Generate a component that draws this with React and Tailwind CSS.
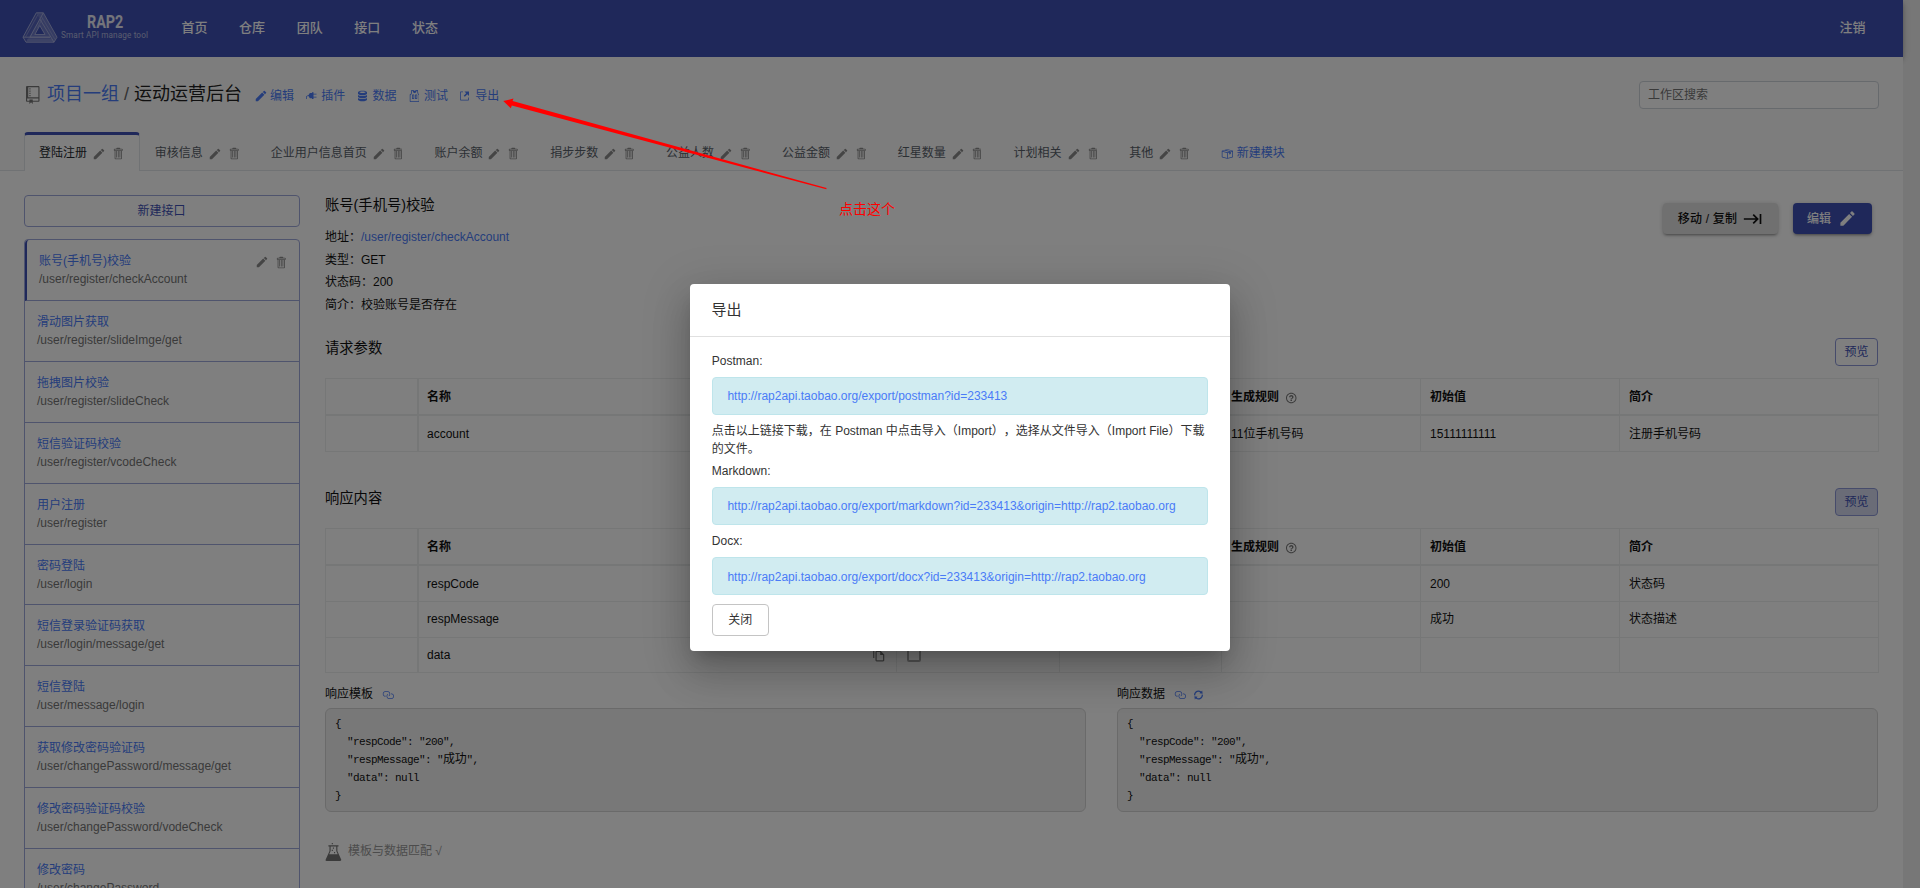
import { MdEdit, MdKeyboardTab, MdOutlineFileCopy } from 'react-icons/md';

const OCTICONS = {
  repo: [12, 'M4 9H3V8h1v1zm0-3H3v1h1V6zm0-2H3v1h1V4zm0-2H3v1h1V2zm8-1v12c0 .55-.45 1-1 1H6v2l-1.5-1.5L3 16v-2H1c-.55 0-1-.45-1-1V1c0-.55.45-1 1-1h10c.55 0 1 .45 1 1zm-1 10H1v2h2v-1h3v1h5v-2zm0-10H2v9h9V1z'],
  trash: [12, 'M11 2H9c0-.55-.45-1-1-1H5c-.55 0-1 .45-1 1H2c-.55 0-1 .45-1 1v1c0 .55.45 1 1 1v9c0 .55.45 1 1 1h7c.55 0 1-.45 1-1V5c.55 0 1-.45 1-1V3c0-.55-.45-1-1-1zm-1 12H3V5h1v8h1V5h1v8h1V5h1v8h1V5h1v9zm1-10H2V3h9v1z'],
  plug: [14, 'M14 6V5h-4V3H8v1H6c-1.03 0-1.77.81-2 2L3 7c-1.66 0-3 1.34-3 3v2h1v-2c0-1.11.89-2 2-2l1 1c.25 1.16.98 2 2 2h2v1h2v-2h4V9h-4V6h4z'],
  database: [12, 'M6 15c-3.31 0-6-.9-6-2v-2c0-.17.09-.34.21-.5.67.86 3 1.5 5.79 1.5s5.12-.64 5.79-1.5c.13.16.21.33.21.5v2c0 1.1-2.69 2-6 2zm0-4c-3.31 0-6-.9-6-2V7c0-.11.04-.21.09-.31.03-.06.07-.13.12-.19C.88 7.36 3.21 8 6 8s5.12-.64 5.79-1.5c.05.06.09.13.12.19.05.1.09.21.09.31v2c0 1.1-2.69 2-6 2zm0-4c-3.31 0-6-.9-6-2V3c0-1.1 2.69-2 6-2s6 .9 6 2v2c0 1.1-2.69 2-6 2zm0-5c-2.21 0-4 .45-4 1s1.79 1 4 1 4-.45 4-1-1.79-1-4-1z'],
  jersey: [14, 'M4.5 6l-.5.5v5l.5.5h2l.5-.5v-5L6.5 6h-2zM6 11H5V7h1v4zm6.27-7.25C12.05 2.37 11.96 1.12 12 0H9.02c0 .27-.13.48-.39.69-.25.2-.63.3-1.13.3-.5 0-.88-.09-1.13-.3-.23-.2-.36-.42-.36-.69H3c.05 1.13-.03 2.38-.25 3.75C2.55 5.13 1.95 5.88 1 6v9c.02.27.11.48.31.69.2.21.42.3.69.31h11c.27-.02.48-.11.69-.31.21-.2.3-.42.31-.69V6c-.95-.13-1.53-.88-1.75-2.25h.02zM13 15H2V7c.89-.5 1.48-1.25 1.72-2.25S4.03 2.5 4 1h1c-.02.78.16 1.47.52 2.06.36.58 1.02.89 2 .94.98-.02 1.64-.33 2-.94.36-.59.5-1.28.48-2.06h1c.02 1.42.13 2.55.33 3.38.2.81.69 2 1.67 2.63v8zM8.5 6l-.5.5v5l.5.5h2l.5-.5v-5l-.5-.5h-2zm1.5 5H9V7h1v4z'],
  external: [12, 'M11 10h1v3c0 .55-.45 1-1 1H1c-.55 0-1-.45-1-1V3c0-.55.45-1 1-1h3v1H1v10h10v-3zM6 2l2.25 2.25L5 7.5 6.5 9l3.25-3.25L12 8V2H6z'],
  box: [16, 'M1 4.27v7.47c0 .45.3.84.75.97l6.5 1.73c.16.05.34.05.5 0l6.5-1.73c.45-.13.75-.52.75-.97V4.27c0-.45-.3-.84-.75-.97l-6.5-1.74a1.4 1.4 0 0 0-.5 0L1.75 3.3c-.45.13-.75.52-.75.97zm7 9.09l-6-1.59V5l6 1.61v6.75zM2 4l2.5-.67L11 5.06l-2.5.67L2 4zm13 7.77l-6 1.59V6.61l2-.55V8.5l2-.53V5.53L15 5v6.77zm-2-7.24L6.5 2.8l2-.53L15 4l-2 .53z'],
  question: [14, 'M6 10h2v2H6v-2zm4-3.5C10 8.64 8 9 8 9H6c0-.55.45-1 1-1h.5c.28 0 .5-.22.5-.5v-1c0-.28-.22-.5-.5-.5h-1c-.28 0-.5.22-.5.5V7H4c0-1.5 1.5-3 3-3s3 1 3 2.5zM7 2.3c3.14 0 5.7 2.56 5.7 5.7s-2.56 5.7-5.7 5.7A5.71 5.71 0 0 1 1.3 8c0-3.14 2.56-5.7 5.7-5.7zM7 1C3.14 1 0 4.14 0 8s3.14 7 7 7 7-3.14 7-7-3.14-7-7-7z'],
  link: [16, 'M4 9h1v1H4c-1.5 0-3-1.69-3-3.5S2.55 3 4 3h4c1.45 0 3 1.69 3 3.5 0 1.41-.91 2.72-2 3.25V8.59c.58-.45 1-1.27 1-2.09C10 5.22 8.98 4 8 4H4c-.98 0-2 1.22-2 2.5S3 9 4 9zm9-3h-1v1h1c1 0 2 1.22 2 2.5S13.98 12 13 12H9c-.98 0-2-1.22-2-2.5 0-.83.42-1.64 1-2.09V6.25c-1.09.53-2 1.84-2 3.25C6 11.31 7.55 13 9 13h4c1.45 0 3-1.69 3-3.5S14.5 6 13 6z'],
  sync: [12, 'M10.24 7.4a4.15 4.15 0 0 1-1.2 3.6 4.346 4.346 0 0 1-5.41.54L4.8 10.4.5 9.8l.6 4.2 1.31-1.26c2.36 1.74 5.7 1.57 7.84-.54a5.876 5.876 0 0 0 1.74-4.46l-1.75-.34zM2.96 5a4.346 4.346 0 0 1 5.41-.54L7.2 5.6l4.3.6-.6-4.2-1.31 1.26c-2.36-1.74-5.7-1.57-7.85.54C.5 5.03-.06 6.65.01 8.26l1.75.35A4.17 4.17 0 0 1 2.96 5z'],
  beaker: [16, 'M14.38 14.59L11 7V3h1V2H3v1h1v4L.63 14.59A1 1 0 0 0 1.54 16h11.94c.72 0 1.2-.75.91-1.41h-.01zM3.75 10L5 7V3h5v4l1.25 3h-7.5zM8 8h1v1H8V8zM7 7H6V6h1v1zm0-3h1v1H7V4zm0-3H6V0h1v1z'],
};

function Octicon({ name, size = 12, className = '' }) {
  if (name === 'pencil') return <MdEdit className={`size-[14px] shrink-0 ${className}`} />;
  const [w, d] = OCTICONS[name];
  return (
    <svg viewBox={`0 0 ${w} 16`} width={(size * w) / 16} height={size} fill="currentColor" className={`shrink-0 ${className}`}>
      <path fillRule="evenodd" d={d} />
    </svg>
  );
}

function Logo() {
  return (
    <svg viewBox="0 0 36 31" className="-mt-px h-[31px] w-9 shrink-0" fill="none" strokeLinejoin="round">
      <path fill="#6c79c6" d="M14.300 .8h7L35 25.200l-3 5H4l-3-5z" />
      <path fill="#5563bc" d="M14.300 .8L1 25.200l3 5L17.800 7z" />
      <path stroke="#a9b1df" strokeWidth="0.900" d="M14.300 .8h7L35 25.200l-3 5H4l-3-5zM21.300 .8L8 25.200h20M17.800 7L32 30.200M28 25.200H1" />
      <path stroke="#a9b1df" strokeWidth="0.500" d="M16 2.500L3.500 25M19.500 4.500L33 27.500M5 28h26M15.500 15.500l5-9" />
      <path fill="#3f51b5" stroke="#a9b1df" strokeWidth="0.900" d="M17.800 13.500l5.200 9H12.800z" />
    </svg>
  );
}

const NAV = ['首页', '仓库', '团队', '接口', '状态'];

function Header() {
  return (
    <header className="flex h-[57px] w-[1903px] shrink-0 items-center bg-[#3f51b5] pb-[2px] pl-[21.500px] pr-[37.500px] text-white shadow-[0_2px_4px_-1px_rgba(0,0,0,0.2),0_4px_5px_0_rgba(0,0,0,0.14),0_1px_10px_0_rgba(0,0,0,0.12)]">
      <Logo />
      <div className="ml-1 flex w-[87px] flex-col items-center pb-[1px] whitespace-nowrap font-['Roboto',sans-serif] text-[#e8eaf6]">
        <span className="scale-x-[0.82] text-[17.500px] leading-[15px] font-bold">RAP2</span>
        <span className="scale-x-[0.86] text-[9.500px] leading-[9px] tracking-[0.150px] text-[#b4bbdf]">Smart API manage tool</span>
      </div>
      <nav className="ml-[33px] flex gap-[31.600px] text-[13px] font-medium">
        {NAV.map((n) => (
          <span key={n} className="w-[26px] whitespace-nowrap">{n}</span>
        ))}
      </nav>
      <span className="ml-auto text-[13px] font-medium">注销</span>
    </header>
  );
}

const ACTIONS = [
  ['pencil', '编辑'],
  ['plug', '插件'],
  ['database', '数据'],
  ['jersey', '测试'],
  ['external', '导出'],
];

function RepoBar() {
  return (
    <div className="flex h-[75px] items-center pb-[1px] pl-[26px] pr-6">
      <Octicon name="repo" size={18} className="mt-[2px] text-[#757575]" />
      <h1 className="ml-[7.500px] flex items-center text-[18px] whitespace-nowrap text-[#212121]">
        <span className="text-[#4a7bf7]">项目一组</span>
        <span className="mx-[5px] text-[#666]">/</span>
        <span>运动运营后台</span>
      </h1>
      <div className="mt-[3px] ml-[12px] flex text-[#4a7bf7]">
        {ACTIONS.map(([icon, label]) => (
          <span key={icon} className="flex w-[51.300px] items-center whitespace-nowrap">
            <span className={`flex w-[16px] ${icon === 'pencil' ? '' : 'pl-[1px]'}`}><Octicon name={icon} size={12} /></span>
            {label}
          </span>
        ))}
      </div>
      <div className="ml-auto mt-[2px] flex h-7 w-[240px] items-center rounded border border-[#ced4da] bg-white pl-2 text-[#757575]">工作区搜索</div>
    </div>
  );
}

const TABS = ['登陆注册', '审核信息', '企业用户信息首页', '账户余额', '捐步步数', '公益人数', '公益金额', '红星数量', '计划相关', '其他'];

function Tabs() {
  return (
    <div className="flex h-[39px] items-stretch border-b border-[#e1e4e8] pl-6 text-[#586069]">
      {TABS.map((t, i) => (
        <div
          key={t}
          className={
            i === 0
              ? 'relative -mb-px flex shrink-0 items-center rounded-t border-x border-t-3 border-x-[#e1e4e8] border-t-[#3f51b5] bg-white pb-[1px] pl-[14px] text-[#24292e]'
              : 'flex shrink-0 items-center border-x border-t-3 border-transparent pl-[14px]'
          }
        >
          <span className="whitespace-nowrap">{t}</span>
          <span className="flex w-[51.800px] items-center pt-[2px] pl-[5px] text-[#8a8a8a]">
            <Octicon name="pencil" />
            <Octicon name="trash" size={13} className="ml-[7px]" />
          </span>
        </div>
      ))}
      <div className="flex items-center gap-1 pt-[3px] pl-[14.500px] whitespace-nowrap text-[#4a7bf7]">
        <Octicon name="box" size={12} className="mt-[2px]" />
        新建模块
      </div>
    </div>
  );
}

const APIS = [
  ['账号(手机号)校验', '/user/register/checkAccount'],
  ['滑动图片获取', '/user/register/slideImge/get'],
  ['拖拽图片校验', '/user/register/slideCheck'],
  ['短信验证码校验', '/user/register/vcodeCheck'],
  ['用户注册', '/user/register'],
  ['密码登陆', '/user/login'],
  ['短信登录验证码获取', '/user/login/message/get'],
  ['短信登陆', '/user/message/login'],
  ['获取修改密码验证码', '/user/changePassword/message/get'],
  ['修改密码验证码校验', '/user/changePassword/vodeCheck'],
  ['修改密码', '/user/changePassword'],
];

function Sidebar() {
  return (
    <aside className="w-[276px] shrink-0">
      <div className="flex h-8 items-center justify-center rounded border border-[#9fa8da] pr-[1px] text-[#3f51b5]">新建接口</div>
      <ul className="mt-3 rounded border border-[#9fa8da]">
        {APIS.map(([name, url], i) => (
          <li
            key={url}
            className={
              i === 0
                ? 'flex h-[61px] items-start justify-between rounded-tl border-b border-l-2 border-b-[#9fa8da] border-l-[#3f51b5] pt-[12px] pr-[13px] pl-[12px]'
                : 'flex h-[60.900px] items-start justify-between border-b border-[#9fa8da] pt-[12px] pl-[12px]'
            }
          >
            <div className="leading-[18px] whitespace-nowrap">
              <div className="text-[#4a7bf7]">{name}</div>
              <div className="text-[#757575]">{url}</div>
            </div>
            {i === 0 && (
              <div className="flex items-center gap-[7px] pt-[3px] text-[#8a8a8a]">
                <Octicon name="pencil" />
                <Octicon name="trash" size={13} />
              </div>
            )}
          </li>
        ))}
      </ul>
    </aside>
  );
}

function Table({ rows }) {
  return (
    <div className="border-t border-l border-[#eceeef]">
      <div className="grid h-[37px] grid-cols-[93px_478px_163px_162px_199px_199px_259px] border-b-2 border-[#eceeef] font-bold">
        {['', '名称', '', '', '生成规则', '初始值', '简介'].map((h, i) => (
          <div key={i} className={`flex items-center border-[#eceeef] ${i === 0 ? 'border-r-2' : 'border-r'} ${i === 1 ? 'pl-[8px]' : 'pl-[9px]'}`}>
            {h}
            {i === 4 && <Octicon name="question" size={12} className="ml-[7px] mt-[2px] text-[#777]" />}
          </div>
        ))}
      </div>
      {rows.map((r, n) => (
        <div key={r[0]} className={`grid grid-cols-[93px_478px_163px_162px_199px_199px_259px] border-b border-[#eceeef] ${n === 0 ? 'h-[36px]' : 'h-[35.500px]'}`}>
          {['', r[0], '', '', r[1], r[2], r[3]].map((c, i) => (
            <div key={i} className={`flex items-center border-[#eceeef] ${i === 0 ? 'border-r-2' : 'border-r'} ${i === 1 ? 'pl-[8px]' : 'pl-[9px]'}`}>
              {c}
              {i === 1 && <MdOutlineFileCopy className="mr-[10px] ml-auto size-[14px] text-[#777]" />}
              {i === 2 && <span className="ml-[1px] size-[14px] rounded-[2px] border-2 border-[#aaa]" />}
            </div>
          ))}
        </div>
      ))}
    </div>
  );
}

function SectionHead({ title, active }) {
  return (
    <div className="flex items-start justify-between pr-[1px]">
      <h2 className="text-[14.300px] leading-5">{title}</h2>
      <span
        className={`flex h-7 w-[43px] items-center justify-center rounded border border-[#8c97d6] text-[#3f51b5] ${active ? 'bg-[#d5d9ee]' : ''}`}
      >
        预览
      </span>
    </div>
  );
}

function CodePanel({ title, sync }) {
  return (
    <div className="w-[761px]">
      <div className="flex h-[28px] items-center pb-[1px]">
        <span>{title}</span>
        <Octicon name="link" size={12} className="mt-[2px] ml-[9px] text-[#4a7bf7]" />
        {sync && <Octicon name="sync" size={12} className="mt-[2px] ml-[8px] text-[#4a7bf7]" />}
      </div>
      <pre className="h-[104px] rounded-md border border-[#d5d5d5] bg-[#f0f0f0] py-[6px] pl-[9px] font-['Liberation_Mono','Noto_Sans_CJK_SC',monospace] text-[11px] leading-[18px] tracking-[-0.600px] text-[#111]">
        {'{\n  "respCode": "200",\n  "respMessage": "'}
        <span className="text-[12px] leading-none tracking-[-0.300px]">成功</span>
        {'",\n  "data": null\n}'}
      </pre>
    </div>
  );
}

function Detail() {
  return (
    <main className="w-[1554px] shrink-0 text-[#111]">
      <div className="flex h-[143px] justify-between">
        <div>
          <h2 className="text-[14.300px] leading-5">账号(手机号)校验</h2>
          <div className="mt-[11px] leading-[22.600px]">
            <div>地址：<span className="text-[#4a7bf7]">/user/register/checkAccount</span></div>
            <div>类型：GET</div>
            <div>状态码：200</div>
            <div>简介：校验账号是否存在</div>
          </div>
        </div>
        <div className="flex gap-[15px] pt-[8px] pr-[7px] font-medium">
          <div className="flex h-[31px] w-[115px] items-center justify-center gap-[6px] rounded bg-[#e0e0e0] shadow-[0_1px_5px_rgba(0,0,0,0.2),0_2px_2px_rgba(0,0,0,0.14),0_3px_1px_-2px_rgba(0,0,0,0.12)]">
            <span className="tracking-[0.200px]">移动 / 复制</span>
            <MdKeyboardTab className="size-5" />
          </div>
          <div className="flex h-[31px] w-[79px] items-center justify-center gap-[7px] rounded bg-[#3f51b5] pr-[1px] text-white shadow-[0_1px_5px_rgba(0,0,0,0.2),0_2px_2px_rgba(0,0,0,0.14),0_3px_1px_-2px_rgba(0,0,0,0.12)]">
            编辑
            <MdEdit className="size-[19px]" />
          </div>
        </div>
      </div>
      <div className="h-[40px]"><SectionHead title="请求参数" /></div>
      <Table rows={[['account', '11位手机号码', '15111111111', '注册手机号码']]} />
      <div className="mt-[36px] h-[40px]"><SectionHead title="响应内容" active /></div>
      <Table
        rows={[
          ['respCode', '', '200', '状态码'],
          ['respMessage', '', '成功', '状态描述'],
          ['data', '', '', ''],
        ]}
      />
      <div className="mt-[7px] flex justify-between pr-[1px]">
        <CodePanel title="响应模板" />
        <CodePanel title="响应数据" sync />
      </div>
      <div className="mt-[29.500px] flex items-center gap-[5px] text-[#999]">
        <Octicon name="beaker" size={18} className="mt-[1px] text-[#757575]" />
        模板与数据匹配 √
      </div>
    </main>
  );
}

function ExportLink({ label, href, height }) {
  return (
    <>
      <div className="leading-[18px]">{label}</div>
      <div className={`mt-[7px] flex items-center rounded border border-[#bee5eb] bg-[#d1ecf1] pl-[14.600px] text-[#4a7bf7] ${height}`}>{href}</div>
    </>
  );
}

function ExportDialog() {
  return (
    <div className="h-[367px] w-[540px] rounded bg-white text-[#333] shadow-[0_11px_15px_-7px_rgba(0,0,0,0.2),0_24px_38px_3px_rgba(0,0,0,0.14),0_9px_46px_8px_rgba(0,0,0,0.12)]">
      <div className="flex h-[53px] items-center border-b border-[#e0e0e0] px-[21.500px] pb-[1px] text-[15px]">导出</div>
      <div className="px-[21.800px] pt-[15px]">
        <ExportLink label="Postman:" href="http://rap2api.taobao.org/export/postman?id=233413" height="h-[38px]" />
        <p className="mt-[7px] mb-[4px] leading-[18px] whitespace-nowrap [text-spacing-trim:space-all]">
          点击以上链接下载，在 Postman 中点击导入（Import），选择从文件导入（Import File）下载
          <br />
          的文件。
        </p>
        <ExportLink label="Markdown:" href="http://rap2api.taobao.org/export/markdown?id=233413&origin=http://rap2.taobao.org" height="h-[38px]" />
        <div className="h-[7px]" />
        <ExportLink label="Docx:" href="http://rap2api.taobao.org/export/docx?id=233413&origin=http://rap2.taobao.org" height="h-[38px] pt-[1px]" />
        <div className="mt-[9px] flex h-8 w-[57px] items-center justify-center rounded border border-[#c4c4c4]">关闭</div>
      </div>
    </div>
  );
}

export default function App() {
  return (
    <div className="relative h-[888px] w-[1920px] overflow-hidden bg-[#efefef] font-['Liberation_Sans','Noto_Sans_CJK_SC',sans-serif] text-[12px] leading-[18px]">
      <Header />
      <div className="w-[1903px] bg-[#fafafa]">
        <RepoBar />
        <Tabs />
      </div>
      <div className="flex h-[717px] w-[1903px] gap-[25px] bg-white pt-6 pl-6">
        <Sidebar />
        <Detail />
      </div>
      <div className="absolute inset-0 bg-black/50" />
      <div className="absolute top-[284px] left-[690px]">
        <ExportDialog />
      </div>
      <svg className="absolute top-[96px] left-[500px]" width="330" height="96" viewBox="500 96 330 96">
        <path fill="#ff0000" d="M503.300 101L513.500 98.600L512.600 101L826.500 188.100L826.300 189.300L511.800 105.600L510.800 108.300Z" />
      </svg>
      <div className="absolute top-[199px] left-[839px] text-[14px] leading-5 whitespace-nowrap text-[#ff0000]">点击这个</div>
    </div>
  );
}
